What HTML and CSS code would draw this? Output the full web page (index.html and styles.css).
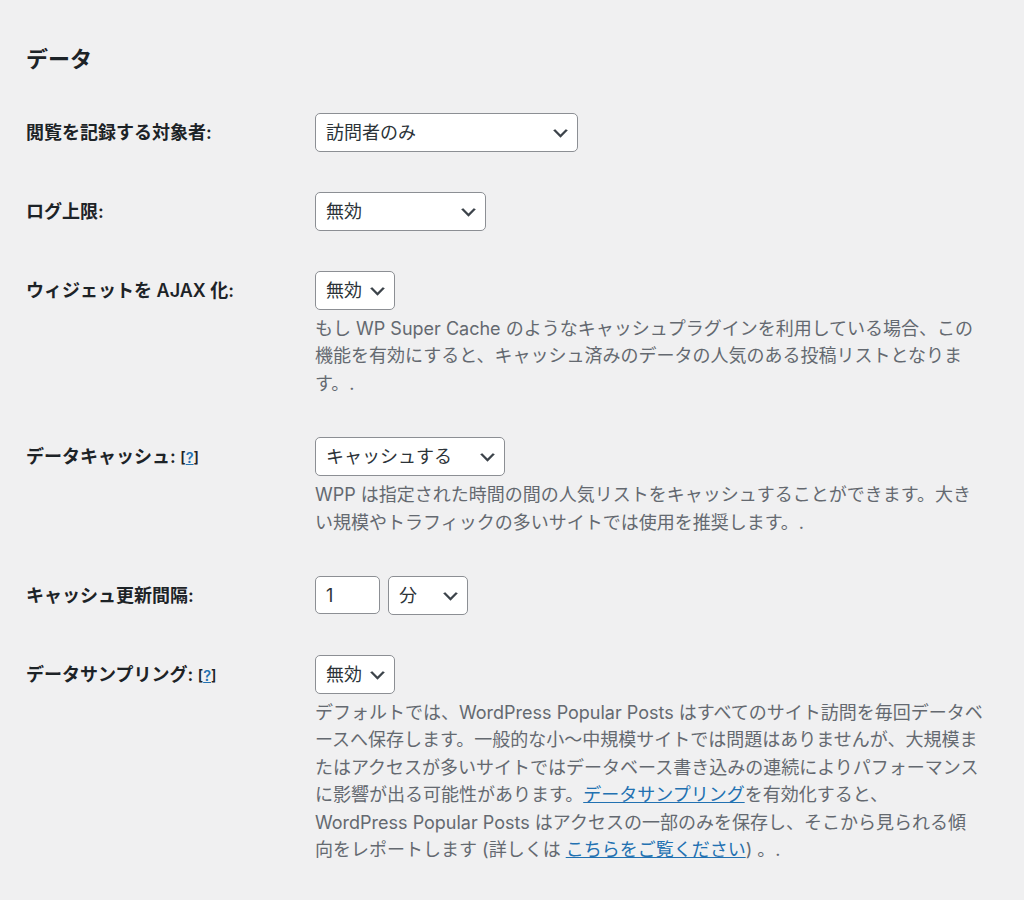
FILE: index.html
```html
<!DOCTYPE html>
<html lang="ja">
<head>
<meta charset="utf-8">
<title>データ</title>
<link rel="stylesheet" href="styles.css">
</head>
<body>
<div class="wrap">
  <h2 class="section-title">データ</h2>
  <div class="form-table">

    <div class="row">
      <div class="label">閲覧を記録する対象者:</div>
      <div class="field">
        <div class="select w-263"><span class="value">訪問者のみ</span><svg class="chev" viewBox="0 0 20 20"><path d="M5 6l5 5 5-5 2 1-7 7-7-7 2-1z"/></svg></div>
      </div>
    </div>

    <div class="row">
      <div class="label">ログ上限:</div>
      <div class="field">
        <div class="select w-171"><span class="value">無効</span><svg class="chev" viewBox="0 0 20 20"><path d="M5 6l5 5 5-5 2 1-7 7-7-7 2-1z"/></svg></div>
      </div>
    </div>

    <div class="row">
      <div class="label">ウィジェットを AJAX 化:</div>
      <div class="field">
        <div class="select w-80"><span class="value">無効</span><svg class="chev" viewBox="0 0 20 20"><path d="M5 6l5 5 5-5 2 1-7 7-7-7 2-1z"/></svg></div>
        <p class="description">もし WP Super Cache のようなキャッシュプラグインを利用している場合、この<br>機能を有効にすると、キャッシュ済みのデータの人気のある投稿リストとなりま<br>す。.</p>
      </div>
    </div>

    <div class="row">
      <div class="label">データキャッシュ: <small class="help">[<a href="#">?</a>]</small></div>
      <div class="field">
        <div class="select w-190"><span class="value">キャッシュする</span><svg class="chev" viewBox="0 0 20 20"><path d="M5 6l5 5 5-5 2 1-7 7-7-7 2-1z"/></svg></div>
        <p class="description">WPP は指定された時間の間の人気リストをキャッシュすることができます。大き<br>い規模やトラフィックの多いサイトでは使用を推奨します。.</p>
      </div>
    </div>

    <div class="row">
      <div class="label">キャッシュ更新間隔:</div>
      <div class="field">
        <div class="inline">
          <div class="input w-65">1</div>
          <div class="select w-80"><span class="value">分</span><svg class="chev" viewBox="0 0 20 20"><path d="M5 6l5 5 5-5 2 1-7 7-7-7 2-1z"/></svg></div>
        </div>
      </div>
    </div>

    <div class="row">
      <div class="label">データサンプリング: <small class="help">[<a href="#">?</a>]</small></div>
      <div class="field">
        <div class="select w-80"><span class="value">無効</span><svg class="chev" viewBox="0 0 20 20"><path d="M5 6l5 5 5-5 2 1-7 7-7-7 2-1z"/></svg></div>
        <p class="description">デフォルトでは、WordPress Popular Posts はすべてのサイト訪問を毎回データベ<br>ースへ保存します。一般的な小〜中規模サイトでは問題はありませんが、大規模ま<br>たはアクセスが多いサイトではデータベース書き込みの連続によりパフォーマンス<br>に影響が出る可能性があります。<a href="#">データサンプリング</a>を有効化すると、<br>WordPress Popular Posts はアクセスの一部のみを保存し、そこから見られる傾<br>向をレポートします (詳しくは <a href="#">こちらをご覧ください</a>) 。.</p>
      </div>
    </div>

  </div>
</div>
</body>
</html>
```

FILE: styles.css
```css
* {
  box-sizing: border-box;
}

html, body {
  margin: 0;
  padding: 0;
  background: #f0f0f1;
}

body {
  font-family: Inter, "Noto Sans CJK JP", sans-serif;
  color: #1d2327;
  font-size: 18px;
}

.wrap {
  padding: 44px 20px 0 26px;
}

.section-title {
  margin: 0 0 19px;
  font-size: 22px;
  line-height: 30px;
  font-weight: 600;
  color: #1d2327;
}

.form-table {
  display: flex;
  flex-direction: column;
}

.row {
  display: flex;
  padding: 20px 0;
}

.label {
  flex: 0 0 289px;
  padding-top: 7.5px;
  font-size: 18px;
  line-height: 24px;
  font-weight: 600;
  color: #1d2327;
}

.help {
  font-size: 14.5px;
  font-weight: 600;
}

.help a {
  color: #2271b1;
  text-decoration: underline;
}

.field {
  flex: 1;
  min-width: 0;
}

.select {
  display: flex;
  align-items: center;
  height: 39px;
  border: 1px solid #8c8f94;
  border-radius: 5px;
  background: #fff;
  padding: 0 6px 0 10px;
  color: #2c3338;
  font-size: 18px;
  line-height: 24px;
}

.select .value {
  flex: 1;
  white-space: nowrap;
}

.chev {
  width: 21px;
  height: 21px;
  flex: 0 0 21px;
  margin-top: 2px;
  fill: #3c434a;
}

.inline {
  display: flex;
  gap: 8px;
}

.input {
  display: flex;
  align-items: center;
  height: 38px;
  border: 1px solid #8c8f94;
  border-radius: 5px;
  background: #fff;
  padding: 0 10px;
  color: #2c3338;
  font-size: 18px;
}

.w-263 { width: 263px; }
.w-171 { width: 171px; }
.w-190 { width: 190px; }
.w-80 { width: 80px; }
.w-65 { width: 65px; }

.description {
  margin: 5px 0 0;
  font-size: 18px;
  line-height: 27.4px;
  color: #646970;
  line-break: loose;
}

.description a {
  color: #2271b1;
  text-decoration: underline;
}
```
